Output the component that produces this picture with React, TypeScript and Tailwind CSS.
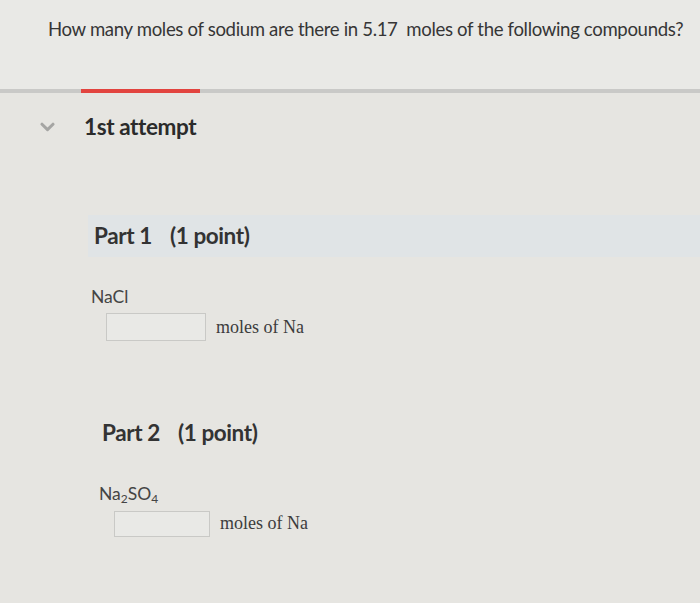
import React from 'react';

const ChevronDown = () => (
  <svg width="15" height="10" viewBox="0 0 15 10" className="block">
    <path d="M2 2.2 L7.5 7.6 L13 2.2" fill="none" stroke="#a5a5a3" strokeWidth="3" strokeLinecap="round" strokeLinejoin="round" />
  </svg>
);

interface PartProps {
  label: string;
  formula: React.ReactNode;
  shaded?: boolean;
  inputClass: string;
}

const Part: React.FC<PartProps> = ({ label, formula, shaded, inputClass }) => (
  <div>
    <div className={`h-[42px] flex items-center pl-[6px] ${shaded ? 'bg-[#e0e4e6]' : ''}`}>
      <span className="text-[22.5px] leading-[28px] font-bold text-[#333333] tracking-[-0.4px]">{label}</span>
      <span className="ml-[18px] text-[22.5px] leading-[28px] font-bold text-[#333333] tracking-[-0.4px]">(1 point)</span>
    </div>
    <div className="mt-[30px] pl-[3px] text-[17.5px] text-[#444444] leading-[20px]">{formula}</div>
    <div className="mt-[6px] flex items-center pl-[18px]">
      <div className={`${inputClass} border border-[#c9c9c6] bg-[#e9e9e6]`}></div>
      <span className="ml-[10px] text-[18px] text-[#3c3c3c]" style={{ fontFamily: '"Liberation Serif", serif' }}>
        moles of Na
      </span>
    </div>
  </div>
);

export default function App() {
  return (
    <div className="w-[700px] h-[603px] overflow-hidden bg-[#e6e5e1] flex flex-col" style={{ fontFamily: 'Lato, "Liberation Sans", sans-serif' }}>
      {/* Question header */}
      <div className="h-[89px] bg-[#e9e9e6] pl-[48px] pt-[17px]">
        <p className="text-[18.6px] leading-[24px] text-[#363636] tracking-[-0.35px] whitespace-pre">
          How many moles of sodium are there in 5.17  moles of the following compounds?
        </p>
      </div>

      {/* Progress tabs */}
      <div className="h-[4px] bg-[#c9c9c7] flex">
        <div className="ml-[81px] w-[119px] h-[4px] bg-[#e2443f]"></div>
      </div>

      {/* Attempt */}
      <div className="mt-[21px] flex items-center h-[26px]">
        <div className="ml-[40px] w-[15px] flex justify-center"><ChevronDown /></div>
        <span className="ml-[29px] text-[22.5px] leading-[26px] font-bold text-[#2b2b2b] tracking-[-0.4px]">1st attempt</span>
      </div>

      <div className="mt-[75px] ml-[88px]">
        <Part label="Part 1" shaded formula="NaCl" inputClass="w-[100px] h-[28px]" />
      </div>

      <div className="mt-[71px] ml-[96px]">
        <Part
          label="Part 2"
          inputClass="w-[96px] h-[26px]"
          formula={
            <span>
              Na<sub className="text-[12px]">2</sub>SO<sub className="text-[12px]">4</sub>
            </span>
          }
        />
      </div>
    </div>
  );
}
